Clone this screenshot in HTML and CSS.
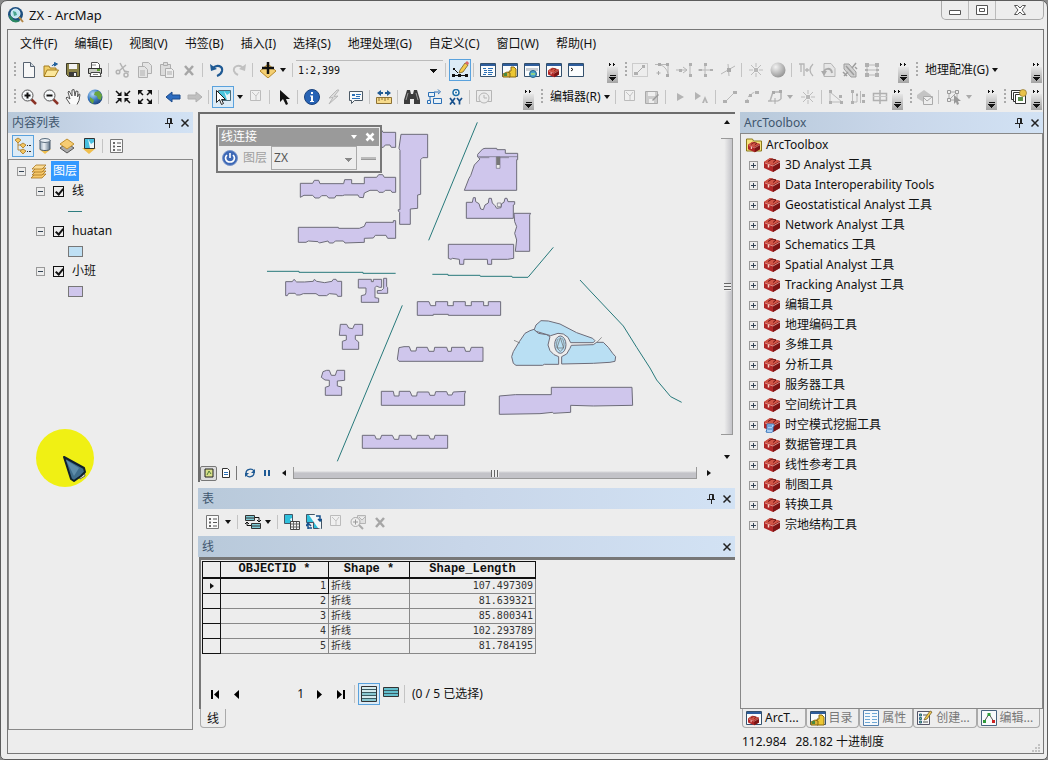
FILE: index.html
```html
<!DOCTYPE html>
<html lang="zh-CN">
<head>
  <meta charset="UTF-8">
  <meta name="viewport" content="width=device-width, initial-scale=1.0">
  <title>ZX - ArcMap</title>
  <link rel="stylesheet" href="styles.css">
</head>
<body>

  <!-- icon set -->
  <svg class="icon-defs" aria-hidden="true">
    <defs>
      <linearGradient id="steel" x1="0" y1="0" x2="1" y2="0"><stop offset="0" stop-color="#8fa3b5"/><stop offset=".4" stop-color="#eef3f7"/><stop offset="1" stop-color="#5f7488"/></linearGradient>
      <radialGradient id="globe" cx=".35" cy=".3" r=".8"><stop offset="0" stop-color="#b7dcf5"/><stop offset=".5" stop-color="#3d7cc4"/><stop offset="1" stop-color="#17396f"/></radialGradient>
      <radialGradient id="ball" cx=".35" cy=".3" r=".8"><stop offset="0" stop-color="#f2f2f2"/><stop offset="1" stop-color="#8c8c8c"/></radialGradient>
    </defs>
    <symbol id="i-app" viewBox="0 0 16 16"><circle cx="7.5" cy="7.5" r="7.5" fill="#1c4f80"/><path d="M1 9c3-2 3 4 6 4s4 1 5 1c-4 3-10 1-11-5z" fill="#2d8a62"/><circle cx="7.5" cy="6.5" r="4.5" fill="#bfe6f2" stroke="#e6f5fa"/><path d="M5 4l3 1 1 3-3 1z" fill="#4aa58c"/><path d="M11 10l4 5" stroke="#b38644" stroke-width="2"/></symbol>
    <symbol id="i-new" viewBox="0 0 16 16"><path d="M2.5.5h7l4 4v11h-11z" fill="#f7f7f7" stroke="#566270"/><path d="M9.5.5v4h4" fill="#cfd8e0" stroke="#566270"/></symbol>
    <symbol id="i-open" viewBox="0 0 16 16"><path d="M1 14V4h5l1 2h6v2" fill="#f0cf68" stroke="#a47d1f"/><path d="M1 14.5L4 8h11.5L12 14.5z" fill="#fbe79c" stroke="#a47d1f"/><path d="M9 4c1-2 3-2 4-2M11.5.5l3 1.5-3 2z" fill="#23619c" stroke="#23619c"/></symbol>
    <symbol id="i-save" viewBox="0 0 16 16"><path d="M1.5 1.5h13v13h-11l-2-2z" fill="#8a8248" stroke="#3c3a28"/><path d="M4 2h8v5H4z" fill="#f3f3f3"/><path d="M4 10h8v4H4z" fill="#3b3b3b"/><path d="M9 11h2v3H9z" fill="#eee"/></symbol>
    <symbol id="i-print" viewBox="0 0 16 16"><path d="M4.5 6V.5h6l2 2V6" fill="#fff" stroke="#555"/><path d="M1.5 6.5h13v5h-13z" fill="#c9ccc4" stroke="#333"/><path d="M4 10.5h9l1 4H3z" fill="#fff" stroke="#444"/><path d="M10 8h3" stroke="#5aa02c" stroke-width="2"/><path d="M5 3h4M6 12.5h5" stroke="#888"/></symbol>
    <symbol id="i-cut" viewBox="0 0 16 16"><g fill="none" stroke="#b3b3b3" stroke-width="1.5"><path d="M5 1l5 9M11 3L4 9"/><circle cx="3" cy="10" r="1.8"/><circle cx="11" cy="13" r="2"/><path d="M9 9l5 1"/></g></symbol>
    <symbol id="i-copy" viewBox="0 0 16 16"><g fill="#e4e4e4" stroke="#b0b0b0"><path d="M5.5.5h6l3 3v8h-9z"/><path d="M1.5 4.5h6l3 3v8h-9z"/><path d="M3 9h5M3 11h5M3 13h5"/></g></symbol>
    <symbol id="i-paste" viewBox="0 0 16 16"><g fill="#dcdcdc" stroke="#adadad"><path d="M1.5 2.5h10v11h-10z"/><path d="M4.5.5h4v3h-4z"/><path d="M6.5 6.5h6l2 2v7h-8z" fill="#eee"/><path d="M8 10h5M8 12h5"/></g></symbol>
    <symbol id="i-x" viewBox="0 0 16 16"><path d="M4 4l8 9M12 4l-8 9" stroke="#a6a6a6" stroke-width="2.5"/></symbol>
    <symbol id="i-undo" viewBox="0 0 16 16"><path d="M4 6c4-4 10-2 9 3-.5 2-2 4-5 5" fill="none" stroke="#1f5a94" stroke-width="2.2"/><path d="M1 2l1 7 6-2z" fill="#1f5a94"/></symbol>
    <symbol id="i-redo" viewBox="0 0 16 16"><path d="M12 6C8 2 2 4 3 9c.5 2 2 3 4 4" fill="none" stroke="#c0c0c0" stroke-width="2"/><path d="M15 2l-1 7-6-2z" fill="#c0c0c0"/></symbol>
    <symbol id="i-add" viewBox="0 0 16 16"><path d="M0 9l8-7 8 7-8 7z" fill="#f4cf72" stroke="#b78a2c"/><path d="M8 0v12M2 6h12" stroke="#111" stroke-width="2.5"/></symbol>
    <symbol id="i-editor" viewBox="0 0 18 18"><path d="M3 14.5h12M2 7l5 5" fill="none" stroke="#111"/><path d="M9 9l5-7 3 2-5 7-4 1z" fill="#f2c94c" stroke="#75602b" stroke-width=".8"/><path d="M14 2l3 2 1-2-2-2z" fill="#d66"/><path d="M1 13h3v3H1zM7 13h3v3H7zM14 13h3v3h-3zM2 7h2v2H2z" fill="#111"/></symbol>
    <symbol id="i-win" viewBox="0 0 16 16"><path d="M.5 1.5h15v13H.5z" fill="#fafcfd" stroke="#34506c"/><path d="M1 2h14v2H1z" fill="#2e5d9c"/></symbol>
    <symbol id="i-toc" viewBox="0 0 16 16"><use href="#i-win"/><path d="M3 6.5h3M4 8.5h3M4 10.5h3M3 12.5h3M8 6.5h5M8 8.5h4M8 10.5h5M8 12.5h4" stroke="#2b6fb5"/></symbol>
    <symbol id="i-catalog" viewBox="0 0 16 16"><use href="#i-win"/><path d="M9 5h3l2 2v8H7V9h2z" fill="#ecc733" stroke="#8a6a10"/><path d="M1 12l4-2 3 1v4H1z" fill="#d8b23a" stroke="#8a6a10"/><path d="M2 11h3v3H2z" fill="#4a8a3f"/></symbol>
    <symbol id="i-search" viewBox="0 0 16 16"><use href="#i-win"/><path d="M2 6h12v3H2z" fill="#c7cdd3"/><circle cx="9" cy="12" r="3.5" fill="#4aa3cc" stroke="#27638a"/><path d="M7 12h4" stroke="#8fd18a" stroke-width="2"/></symbol>
    <symbol id="i-box" viewBox="0 0 16 16"><path d="M0 5l6-4 10 3v7l-7 4-9-4z" fill="#b02626"/><path d="M0 5l6-4 10 3-7 4z" fill="#cf5445"/><path d="M9 8v7l7-4V4z" fill="#7c1414"/><path d="M1 6l8 3 7-4" fill="none" stroke="#eeb0a6" stroke-width=".8"/><path d="M4 4.5L8 2l4 1-3 2.5" fill="none" stroke="#6d1212"/><path d="M4.5 7.5v3" stroke="#f6d2c8" stroke-width="1.5"/></symbol>
    <symbol id="i-toolbox" viewBox="0 0 16 16"><use href="#i-win"/><use href="#i-box" x="2" y="5" width="11" height="11"/></symbol>
    <symbol id="i-boxfolder" viewBox="0 0 16 16"><path d="M.5 14V2h6l1 2h8v10z" fill="#f6e27c" stroke="#8a7a1d"/><use href="#i-box" x="2" y="4" width="12" height="12"/></symbol>
    <symbol id="i-boxscript" viewBox="0 0 16 16"><use href="#i-box"/><path d="M3 7h6c2 0 1 3 0 3v4c0 2-4 2-7 1l1-3z" fill="#a8cdf3" stroke="#3d78bb"/><path d="M4 9h4M4 12h4" stroke="#3d78bb"/></symbol>
    <symbol id="i-python" viewBox="0 0 16 16"><use href="#i-win"/><path d="M3 6l2 1.5L3 9" fill="none" stroke="#111"/></symbol>
    <symbol id="i-zoomin" viewBox="0 0 16 16"><path d="M10 10l5 5" stroke="#8a3226" stroke-width="2.5"/><circle cx="6.5" cy="6.5" r="5.5" fill="#f5f8fa" stroke="#555"/><path d="M6.5 3.5v6M3.5 6.5h6" stroke="#111" stroke-width="2"/></symbol>
    <symbol id="i-zoomout" viewBox="0 0 16 16"><path d="M10 10l5 5" stroke="#8a3226" stroke-width="2.5"/><circle cx="6.5" cy="6.5" r="5.5" fill="#f5f8fa" stroke="#555"/><path d="M3.5 6.5h6" stroke="#111" stroke-width="2"/></symbol>
    <symbol id="i-pan" viewBox="0 0 16 16"><path d="M5 15L1 9l1-1 3 2-2-7 1-1 3 5V1l2-.5L10 7l1-5 2 .5-.5 5.5L14 5l1 .5-1 6-2 4" fill="#fafafa" stroke="#555"/></symbol>
    <symbol id="i-globe" viewBox="0 0 16 16"><circle cx="8" cy="8" r="7.5" fill="url(#globe)"/><path d="M8 3l4-1 3 4-1 5-3-1-1-3-3-1zM3 8l4 3-1 4-3-3z" fill="#6aa53f"/></symbol>
    <symbol id="i-fixin" viewBox="0 0 16 16"><path d="M1 2l4 4M15 2l-4 4M1 14l4-4M15 14l-4-4" stroke="#111" stroke-width="1.5"/><path d="M6.5 7H2l4.5-4.5zM9.5 7V2.5L14 7zM6.5 9v4.5L2 9zM9.5 9H14l-4.5 4.5z" fill="#111"/></symbol>
    <symbol id="i-fixout" viewBox="0 0 16 16"><path d="M2 2l4 4M14 2l-4 4M2 14l4-4M14 14l-4-4" stroke="#111" stroke-width="1.5"/><path d="M1 1h5L1 6zM15 1v5l-5-5zM1 15v-5l5 5zM15 15h-5l5-5z" fill="#111"/></symbol>
    <symbol id="i-back" viewBox="0 0 16 16"><path d="M1 8l6-5v3h8v4H7v3z" fill="#2c6cc0" stroke="#1b4a8c"/></symbol>
    <symbol id="i-fwd" viewBox="0 0 16 16"><path d="M15 8L9 3v3H1v4h8v3z" fill="#c0c0c0" stroke="#b0b0b0"/></symbol>
    <symbol id="i-select" viewBox="0 0 16 16"><path d="M3.5 1.5h12v10h-12z" fill="#49c5dd" stroke="#4d6a77"/><path d="M9 2l3 4 3-2v7h-3z" fill="#eaf5f8"/><path d="M1.5 1.5v12l3-3 2 5 2-1-2-4h4z" fill="#fff" stroke="#222"/></symbol>
    <symbol id="i-clear" viewBox="0 0 16 16"><path d="M2.5 1.5h10v10h-10z" fill="#f0f0f0" stroke="#bbb"/><path d="M4 3l4 4 3-4M8 7v4" fill="none" stroke="#c4c4c4"/></symbol>
    <symbol id="i-arrow" viewBox="0 0 16 16"><path d="M4 1v12l3-3 3 6 2-1-2-5h4z" fill="#111"/></symbol>
    <symbol id="i-info" viewBox="0 0 16 16"><circle cx="8" cy="8" r="7.5" fill="#2763b5" stroke="#1a437e"/><path d="M7 3h2v2H7zM6 6.5h3V12h1v1H6v-1h1V7.5H6z" fill="#fff"/></symbol>
    <symbol id="i-bolt" viewBox="0 0 16 16"><path d="M11 1L3 9l4-.5L3 15l9-8-4 .5L13 1z" fill="#ddd" stroke="#b8b8b8"/></symbol>
    <symbol id="i-html" viewBox="0 0 16 16"><path d="M1.5 2.5h13v9h-8l-3 3v-3h-2z" fill="#f8fafb" stroke="#4d5a66"/><path d="M4 5h3v2H4z" fill="#2b6fb5"/><path d="M8 5.5h5M8 7.5h4M4 9.5h8" stroke="#2b6fb5"/></symbol>
    <symbol id="i-measure" viewBox="0 0 16 16"><path d="M.5 8.5h15v6H.5z" fill="#f7db8b" stroke="#8d7134"/><path d="M3 9v3M6 9v2M9 9v3M12 9v2" stroke="#8d7134"/><path d="M1 4l4-3v2h2v2H5v2zM15 4l-4-3v2H9v2h2v2z" fill="#1f5a94"/></symbol>
    <symbol id="i-find" viewBox="0 0 16 16"><path d="M3 1h3l1 4h2l1-4h3l3 10v4h-6v-5H6v5H0v-4z" fill="#3c3c3c"/><path d="M4 4l-2 7M12 4l2 7" stroke="#999"/></symbol>
    <symbol id="i-route" viewBox="0 0 16 16"><g fill="#e7f1f8" stroke="#2b6fb5"><path d="M2.5 3.5h6v4h-6zM7.5 9.5h8v5h-8zM1.5 11.5h3v3h-3z"/><path d="M8 3h5M12 .5L14.5 3 12 5M4 8v3" fill="none"/></g></symbol>
    <symbol id="i-xy" viewBox="0 0 16 16"><circle cx="8" cy="3.5" r="3" fill="#fff" stroke="#1f6fa8" stroke-width="1.5"/><circle cx="8" cy="3.5" r="1" fill="#1f6fa8"/><path d="M2 9l5 6.5M7 9l-5 6.5M9 9l2.5 3L14 9M11.5 12v3.5" fill="none" stroke="#17508c" stroke-width="1.7"/></symbol>
    <symbol id="i-time" viewBox="0 0 16 16"><g fill="#ececec" stroke="#b5b5b5"><path d="M.5 1.5h15v11H.5z"/><circle cx="8" cy="9" r="5"/><path d="M8 6v3h3" fill="none"/></g></symbol>
    <symbol id="i-savegray" viewBox="0 0 16 16"><path d="M1.5 2.5h12v12h-12z" fill="#ccc" stroke="#aaa"/><path d="M4 3h7v4H4zM5 10h5v4H5z" fill="#eee"/><path d="M8 11l6-6 1 1-6 6z" fill="#999"/></symbol>
    <symbol id="i-play" viewBox="0 0 16 16"><path d="M5 4l7 4-7 4z" fill="#b4b4b4"/></symbol>
    <symbol id="i-playa" viewBox="0 0 16 16"><path d="M1 3l6 4-6 4zM8 14l3-7 3 7h-2l-1-3-1 3z" fill="#b4b4b4"/></symbol>
    <symbol id="i-line" viewBox="0 0 16 16"><path d="M3 13L13 3" stroke="#bbb"/><path d="M1 11h4v3H1zM11 2h4v3h-4z" fill="#b0b0b0"/></symbol>
    <symbol id="i-arc" viewBox="0 0 16 16"><path d="M3 13c0-6 4-9 9-10" fill="none" stroke="#bbb" stroke-dasharray="3 2"/><path d="M1 11h4v3H1zM5 5h3v3H5zM11 2h4v3h-4z" fill="#b0b0b0"/></symbol>
    <symbol id="i-trace" viewBox="0 0 16 16"><path d="M3 12l3-9h8v7M1 12h4M11 12l3-2" fill="none" stroke="#b5b5b5" stroke-width="1.5"/><path d="M5 2h3v3H5zM12 1h3v3h-3z" fill="#aaa"/><path d="M8 9v6M5 12h6" stroke="#aaa"/></symbol>
    <symbol id="i-burst" viewBox="0 0 16 16"><path d="M8 1v4M8 11v4M1 8h4M11 8h4M3 3l3 3M13 3l-3 3M3 13l3-3M13 13l-3-3" stroke="#bdbdbd"/><path d="M6 6h4v4H6z" fill="#b8b8b8"/></symbol>
    <symbol id="i-edge" viewBox="0 0 16 16"><path d="M2 13V3l12 10z" fill="none" stroke="#bbb"/><path d="M1 1h3v3H1zM1 12h3v3H1zM12 12h3v3h-3zM11 6h3v3h-3z" fill="#b0b0b0"/></symbol>
    <symbol id="i-mirror" viewBox="0 0 16 16"><path d="M2.5 2v12M2 13h5V4M10.5 2v12" fill="none" stroke="#bbb"/><path d="M1 1h3v3H1zM1 12h3v3H1zM6 5h2v2H6zM12 5h3v3h-3zM12 11h3v3h-3z" fill="#b0b0b0"/></symbol>
    <symbol id="i-split" viewBox="0 0 16 16"><path d="M1.5 4.5h13v7h-13zM8 1v14" fill="none" stroke="#b0b0b0" stroke-width="1.5"/><path d="M1 7.5h14" stroke="#c4c4c4"/></symbol>
    <symbol id="i-dashline" viewBox="0 0 16 16"><path d="M.5 1.5h15v13H.5z" fill="none" stroke="#aaa" stroke-dasharray="1 1"/><path d="M4 12l8-8" stroke="#aaa"/><path d="M2 10h4v3H2zM10 3h3v3h-3z" fill="#b0b0b0"/></symbol>
    <symbol id="i-fillet" viewBox="0 0 16 16"><path d="M1 2.5h13v12M5 2.5c5 1 8 5 9 9" fill="none" stroke="#b8b8b8"/><path d="M4 1h3v3H4zM12 1h3v3h-3zM12 12h3v3h-3z" fill="#aaa"/><path d="M4.5 9v4M2.5 11h4" stroke="#aaa"/></symbol>
    <symbol id="i-extend" viewBox="0 0 16 16"><path d="M0 8h11M14 2v12M7 5l4 3-4 3" fill="none" stroke="#b5b5b5"/><path d="M3 7h3v3H3zM13 1h3v3h-3zM13 12h3v3h-3z" fill="#b0b0b0"/></symbol>
    <symbol id="i-trim" viewBox="0 0 16 16"><path d="M0 8h15M7 1v14" stroke="#b8b8b8"/><path d="M6 1h3v3H6zM6 12h3v3H6zM1 7h3v2H1zM12 7h3v2h-3z" fill="#b0b0b0"/></symbol>
    <symbol id="i-cross" viewBox="0 0 16 16"><path d="M1 12L15 4M8 2l1 12" stroke="#b8b8b8"/><path d="M7 6h4v4H7z" fill="#aaa"/></symbol>
    <symbol id="i-ball" viewBox="0 0 16 16"><circle cx="8" cy="8" r="7.5" fill="url(#ball)"/></symbol>
    <symbol id="i-align" viewBox="0 0 16 16"><path d="M1 2h5v12M3 2v8M7 8h4M9 6v4M15 2c-4 4-4 8 0 12" fill="none" stroke="#b5b5b5" stroke-width="1.3"/></symbol>
    <symbol id="i-rotate" viewBox="0 0 16 16"><path d="M4 1.5h7l4 5v8H4z" fill="#e6e6e6" stroke="#b5b5b5"/><path d="M12 11c-1-6-8-5-8 0" fill="none" stroke="#aaa" stroke-width="2"/><path d="M1 9h6l-3 5z" fill="#aaa"/></symbol>
    <symbol id="i-cutpoly" viewBox="0 0 16 16"><path d="M2 2h5l7 8v5h-5L2 7z" fill="#d0d0d0" stroke="#9d9d9d"/><path d="M14 1l-4 5M6 10l-4 4M4 4l8 9M13 5l2 2M1 10l4 4" stroke="#9d9d9d" stroke-width="1.5"/></symbol>
    <symbol id="i-mesh" viewBox="0 0 16 16"><path d="M3 1v14M13 1v14M1 3h14M1 8h14M1 13h14" stroke="#b8b8b8"/><path d="M1 1h4v4H1zM11 1h4v4h-4zM1 11h4v4H1zM11 11h4v4h-4zM1 7h3v2H1zM12 7h3v2h-3z" fill="#b0b0b0"/></symbol>
    <symbol id="i-topo" viewBox="0 0 16 16"><path d="M0 6l7-5 7 5v5l-6 3-8-5z" fill="#c4c4c4"/><path d="M6.5 7.5h9v8h-9z" fill="#eee" stroke="#aaa"/><path d="M7 9l3 3 5-4" fill="none" stroke="#aaa"/></symbol>
    <symbol id="i-topoedit" viewBox="0 0 16 16"><path d="M3 3h8v8H3zM3 11l8-8" fill="none" stroke="#aaa"/><path d="M1.5 1.5h3v3h-3zM9.5 1.5h3v3h-3zM1.5 9.5h3v3h-3z" fill="#ededed" stroke="#999"/><path d="M8 6v9l2-2 1 3 2-1-1-3h3z" fill="#999"/></symbol>
    <symbol id="i-stack" viewBox="0 0 16 16"><g fill="#fff" stroke="#333"><path d="M.5 1.5h9v9h-9z"/><path d="M2.5 3.5h9v9h-9z"/><path d="M4.5 5.5h10v9h-10z"/></g><circle cx="12" cy="4" r="3.5" fill="#e9c24a" stroke="#826622" stroke-width=".6"/><path d="M7 8h5v4H7z" fill="#5e8f4c"/></symbol>
    <symbol id="i-listdraw" viewBox="0 0 18 18"><path d="M4 4v9h5M4 8h5" fill="none" stroke="#b68a3c"/><path d="M1 3l3-2 3 2-3 3zM6 8l3-2 3 2-3 3zM6 14l3-2 3 2-3 3z" fill="#f3c65f" stroke="#b68a3c"/><path d="M13 8.5h1M13 14.5h1M15 8.5h2M15 14.5h2" stroke="#333"/></symbol>
    <symbol id="i-listsource" viewBox="0 0 16 16"><path d="M2 11h12l-6 5z" fill="#f0bf4d"/><path d="M3 2v9c0 2 10 2 10 0V2z" fill="url(#steel)" stroke="#4a5b6b"/><ellipse cx="8" cy="2.5" rx="5" ry="2" fill="#e8eef3" stroke="#5b6d7e"/></symbol>
    <symbol id="i-listvis" viewBox="0 0 16 16"><path d="M1 10l7-5 7 5-7 5z" fill="#aaa" stroke="#555"/><path d="M1 6l7-5 7 5-7 5z" fill="#f6cc72" stroke="#c2912f"/></symbol>
    <symbol id="i-listsel" viewBox="0 0 16 16"><path d="M1 10h14l-7 6z" fill="#f0bf4d"/><path d="M3.5.5h10v10h-10z" fill="#48bfe0" stroke="#333"/><path d="M7 1l3 5 3-2v6H9z" fill="#eef8fb"/></symbol>
    <symbol id="i-options" viewBox="0 0 16 16"><path d="M1.5 1.5h12v13h-12z" fill="#fafafa" stroke="#777"/><path d="M4 4h2v2H4zM4 7.5h2v2H4zM4 11h2v2H4z" fill="#666"/><path d="M8 5h4M8 8.5h4M8 12h4" stroke="#555"/></symbol>
    <symbol id="i-layers" viewBox="0 0 16 16"><g fill="#f6c768" stroke="#a87722" stroke-width=".8"><path d="M0 15l4-4h11l-4 4z"/><path d="M1 12l4-4h10l-4 4z"/><path d="M1 9l4-4h10l-4 4z"/><path d="M1 6l4-4h10l-4 4z" fill="#fbdc95"/></g></symbol>
    <symbol id="i-pin" viewBox="0 0 10 12"><path d="M3.5 6.5v-5h4v5M1 6.5h8M6.5 1v5M5.5 7v4" fill="none" stroke="#222"/></symbol>
    <symbol id="i-close" viewBox="0 0 10 10"><path d="M1.5 1.5l7 7M8.5 1.5l-7 7" stroke="currentColor" stroke-width="1.5"/></symbol>
    <symbol id="i-close-bold" viewBox="0 0 10 10"><path d="M1.5 1.5l7 7M8.5 1.5l-7 7" stroke="#fff" stroke-width="2.5"/></symbol>
    <symbol id="i-power" viewBox="0 0 16 16"><circle cx="8" cy="8" r="7.5" fill="#3d68b6" stroke="#7c98cb"/><path d="M5 5c-3 3-1 7 3 7s6-4 3-7M8 3v5" fill="none" stroke="#fff" stroke-width="1.6"/></symbol>
    <symbol id="i-dataview" viewBox="0 0 12 12"><path d="M2 2h8v8H2z" fill="#d8e08a" stroke="#222"/><path d="M4 8l2-4 2 3" fill="none" stroke="#4d7a3c"/></symbol>
    <symbol id="i-layout" viewBox="0 0 12 12"><path d="M2.5 1.5h5l2 2v7h-7z" fill="#fff" stroke="#333"/><path d="M4 5.5h4M4 7.5h4" stroke="#2b6fb5"/></symbol>
    <symbol id="i-refresh" viewBox="0 0 12 12"><path d="M2 6c0-4 6-5 8-2M10 6c0 4-6 5-8 2" fill="none" stroke="#1f5a94" stroke-width="1.3"/><path d="M11 2v4H7zM1 10V6h4z" fill="#1f5a94"/></symbol>
    <symbol id="i-pause" viewBox="0 0 12 12"><path d="M3 3h2v6H3zM7 3h2v6H7z" fill="#1f5a94"/></symbol>
    <symbol id="i-related" viewBox="0 0 16 16"><path d="M.5 1.5h9v5h-9zM6.5 9.5h9v5h-9z" fill="#7fcbd6" stroke="#333"/><path d="M1 4h8M7 12h8" stroke="#333"/><path d="M10 3.5h4v4M12 6l2 2 2-2M6 11.5H2v-3M0 10l2-2 2 2" fill="none" stroke="#111"/></symbol>
    <symbol id="i-selattr" viewBox="0 0 16 16"><path d="M.5.5h8v9h-8z" fill="#2fc0dc" stroke="#456"/><path d="M4 1l2 4 2-1v5z" fill="#eef8fb"/><path d="M6.5 7.5h9v8h-9z" fill="#f4f4f4" stroke="#444"/><path d="M7 10h8M7 13h8M9.5 8v7M12.5 8v7" stroke="#666"/></symbol>
    <symbol id="i-switch" viewBox="0 0 16 16"><path d="M.5.5h8v8h-8zM7.5 5.5h8v9h-8z" fill="#2fc0dc" stroke="#456"/><path d="M3 1l4 6 5 7 3 1V8L9 1z" fill="#f2f7f9"/><path d="M10 2h4v4M12 5l2 2 2-2M2 15v-5M0 12l2-3 3 3M2 14h4" fill="none" stroke="#17508c" stroke-width="1.5"/></symbol>
    <symbol id="i-zoomsel" viewBox="0 0 16 16"><path d="M7.5 1.5h8v8h-8zM9 3l3 3 3-3" fill="#e0e0e0" stroke="#b5b5b5"/><circle cx="5.5" cy="8" r="4.5" fill="#eee" stroke="#aaa"/><path d="M9 11l4 4" stroke="#aaa" stroke-width="2"/><path d="M3 8h5M5.5 5.5v5" stroke="#999"/></symbol>
    <symbol id="i-allrows" viewBox="0 0 16 16"><path d="M.5.5h15v15H.5z" fill="#d5ebee" stroke="#333"/><path d="M1 3.5h14M1 6.5h14M1 9.5h14M1 12.5h14" stroke="#3a5c64"/><path d="M1 7h14v2H1zM1 13h14v2H1z" fill="#88c7d0"/></symbol>
    <symbol id="i-selrows" viewBox="0 0 16 16"><path d="M.5 1.5h15v9H.5z" fill="#64bfcd" stroke="#333"/><path d="M1 4.5h14M1 7.5h14" stroke="#3a5c64"/></symbol>
    <symbol id="i-attrs" viewBox="0 0 16 16"><path d="M.5.5h15v15H.5z" fill="#f5f9fc" stroke="#5380ad"/><path d="M2 3.5h5M9 3.5h5M2 6.5h5M9 6.5h5M2 9.5h5M9 9.5h5M2 12.5h5M9 12.5h5" stroke="#6fa9d6"/></symbol>
    <symbol id="i-create" viewBox="0 0 16 16"><path d="M.5 1.5h12v13H.5z" fill="#f8f8f8" stroke="#556"/><path d="M2.5 4h2v2h-2zM2.5 7.5h2v2h-2zM2.5 11h2v2h-2z" fill="#7fcb70" stroke="#368"/><path d="M6 5h4M6 12h5" stroke="#555"/><path d="M8 8l5-7 2 1-5 7-3 1z" fill="#f2c94c" stroke="#75602b" stroke-width=".8"/></symbol>
    <symbol id="i-sketch" viewBox="0 0 16 16"><path d="M.5.5h15v15H.5z" fill="#f8fafc" stroke="#47627d"/><path d="M3 12l5-8 5 8" fill="none" stroke="#555"/><path d="M2 10h3v3H2zM6.5 3h3v3h-3z" fill="#2f9a3c"/><path d="M11 10h3v3h-3z" fill="#c22"/></symbol>
  </svg>

  <div class="window">
    <header class="titlebar">
      <svg class="icon"><use href="#i-app"/></svg>
      <h1>ZX - ArcMap</h1>
      <div class="window-buttons">
        <button aria-label="最小化"><svg width="14" height="14"><path d="M1.5 7.5h11v4h-11z" fill="#fff" stroke="#555"/></svg></button>
        <button aria-label="还原"><svg width="14" height="14"><path d="M1.5 2.5h11v9h-11z" fill="#fff" stroke="#555"/><path d="M4.5 5.5h5v3h-5z" fill="#fff" stroke="#555"/></svg></button>
        <button class="wide" aria-label="关闭"><svg width="14" height="14"><path d="M1.5 2.5h3L7 5l2.5-2.5h3L9 7l3.5 4.5h-3L7 9l-2.5 2.5h-3L5 7z" fill="#fff" stroke="#555"/></svg></button>
      </div>
    </header>

    <div class="frame">
      <nav class="menubar">
        <button>文件(F)</button>
        <button>编辑(E)</button>
        <button>视图(V)</button>
        <button>书签(B)</button>
        <button>插入(I)</button>
        <button>选择(S)</button>
        <button>地理处理(G)</button>
        <button>自定义(C)</button>
        <button>窗口(W)</button>
        <button>帮助(H)</button>
      </nav>

      <div class="toolbars row-one">
        <div class="bar">
          <span class="grip"></span>
          <button class="tool" aria-label="新建"><svg class="icon"><use href="#i-new"/></svg></button>
          <button class="tool" aria-label="打开"><svg class="icon"><use href="#i-open"/></svg></button>
          <button class="tool" aria-label="保存"><svg class="icon"><use href="#i-save"/></svg></button>
          <button class="tool" aria-label="打印"><svg class="icon"><use href="#i-print"/></svg></button>
          <span class="sep"></span>
          <button class="tool" aria-label="剪切" disabled><svg class="icon"><use href="#i-cut"/></svg></button>
          <button class="tool" aria-label="复制" disabled><svg class="icon"><use href="#i-copy"/></svg></button>
          <button class="tool" aria-label="粘贴" disabled><svg class="icon"><use href="#i-paste"/></svg></button>
          <button class="tool" aria-label="删除" disabled><svg class="icon"><use href="#i-x"/></svg></button>
          <span class="sep"></span>
          <button class="tool" aria-label="撤销"><svg class="icon"><use href="#i-undo"/></svg></button>
          <button class="tool" aria-label="恢复" disabled><svg class="icon"><use href="#i-redo"/></svg></button>
          <span class="sep"></span>
          <button class="tool drop" aria-label="添加数据"><svg class="icon"><use href="#i-add"/></svg><span class="caret"></span></button>
          <span class="sep"></span>
          <select class="scale" aria-label="地图比例"><option>1:2,399</option></select>
          <span class="sep"></span>
          <button class="tool pressed" aria-label="编辑器工具条"><svg class="icon large"><use href="#i-editor"/></svg></button>
          <span class="sep"></span>
          <button class="tool" aria-label="内容列表"><svg class="icon"><use href="#i-toc"/></svg></button>
          <button class="tool" aria-label="目录"><svg class="icon"><use href="#i-catalog"/></svg></button>
          <button class="tool" aria-label="搜索"><svg class="icon"><use href="#i-search"/></svg></button>
          <button class="tool" aria-label="工具箱"><svg class="icon"><use href="#i-toolbox"/></svg></button>
          <button class="tool" aria-label="Python"><svg class="icon"><use href="#i-python"/></svg></button>
          <button class="overflow" aria-label="更多"></button>
        </div>
        <div class="bar">
          <span class="grip"></span>
          <button class="tool" aria-label="复制平行线" disabled><svg class="icon"><use href="#i-dashline"/></svg></button>
          <button class="tool" aria-label="内圆角" disabled><svg class="icon"><use href="#i-fillet"/></svg></button>
          <button class="tool" aria-label="延伸" disabled><svg class="icon"><use href="#i-extend"/></svg></button>
          <button class="tool" aria-label="修剪" disabled><svg class="icon"><use href="#i-trim"/></svg></button>
          <button class="tool" aria-label="线相交" disabled><svg class="icon"><use href="#i-cross"/></svg></button>
          <span class="sep"></span>
          <button class="tool" aria-label="拆分多部件" disabled><svg class="icon"><use href="#i-burst"/></svg></button>
          <button class="tool" aria-label="构造大地测量" disabled><svg class="icon"><use href="#i-ball"/></svg></button>
          <span class="sep"></span>
          <button class="tool" aria-label="对齐" disabled><svg class="icon"><use href="#i-align"/></svg></button>
          <button class="tool" aria-label="替换几何" disabled><svg class="icon"><use href="#i-rotate"/></svg></button>
          <button class="tool" aria-label="构造面" disabled><svg class="icon"><use href="#i-cutpoly"/></svg></button>
          <button class="tool" aria-label="分割面" disabled><svg class="icon"><use href="#i-mesh"/></svg></button>
          <button class="overflow" aria-label="更多"></button>
        </div>
        <div class="bar">
          <span class="grip"></span>
          <button class="text-tool">地理配准(G)<span class="caret"></span></button>
          <button class="overflow" aria-label="更多"></button>
        </div>
      </div>

      <div class="toolbars row-two">
        <div class="bar">
          <span class="grip"></span>
          <button class="tool" aria-label="放大"><svg class="icon"><use href="#i-zoomin"/></svg></button>
          <button class="tool" aria-label="缩小"><svg class="icon"><use href="#i-zoomout"/></svg></button>
          <button class="tool" aria-label="平移"><svg class="icon"><use href="#i-pan"/></svg></button>
          <button class="tool" aria-label="全图"><svg class="icon"><use href="#i-globe"/></svg></button>
          <span class="sep"></span>
          <button class="tool" aria-label="固定比例放大"><svg class="icon"><use href="#i-fixin"/></svg></button>
          <button class="tool" aria-label="固定比例缩小"><svg class="icon"><use href="#i-fixout"/></svg></button>
          <span class="sep"></span>
          <button class="tool" aria-label="上一视图"><svg class="icon"><use href="#i-back"/></svg></button>
          <button class="tool" aria-label="下一视图" disabled><svg class="icon"><use href="#i-fwd"/></svg></button>
          <span class="sep"></span>
          <button class="tool pressed" aria-label="选择要素"><svg class="icon"><use href="#i-select"/></svg></button>
          <button class="arrow-only" aria-label="选择方式"><span class="caret"></span></button>
          <button class="tool" aria-label="清除所选要素" disabled><svg class="icon"><use href="#i-clear"/></svg></button>
          <span class="sep"></span>
          <button class="tool" aria-label="选择元素"><svg class="icon"><use href="#i-arrow"/></svg></button>
          <span class="sep"></span>
          <button class="tool" aria-label="识别"><svg class="icon"><use href="#i-info"/></svg></button>
          <button class="tool" aria-label="超链接" disabled><svg class="icon"><use href="#i-bolt"/></svg></button>
          <button class="tool" aria-label="HTML 弹出窗口"><svg class="icon"><use href="#i-html"/></svg></button>
          <span class="sep"></span>
          <button class="tool" aria-label="测量"><svg class="icon"><use href="#i-measure"/></svg></button>
          <span class="sep"></span>
          <button class="tool" aria-label="查找"><svg class="icon"><use href="#i-find"/></svg></button>
          <button class="tool" aria-label="查找路径"><svg class="icon"><use href="#i-route"/></svg></button>
          <button class="tool" aria-label="转到 XY"><svg class="icon"><use href="#i-xy"/></svg></button>
          <span class="sep"></span>
          <button class="tool" aria-label="时间滑块" disabled><svg class="icon"><use href="#i-time"/></svg></button>
          <button class="overflow" aria-label="更多"></button>
        </div>
        <div class="bar">
          <span class="grip"></span>
          <button class="text-tool">编辑器(R)<span class="caret"></span></button>
          <span class="sep"></span>
          <button class="tool" aria-label="清除" disabled><svg class="icon"><use href="#i-clear"/></svg></button>
          <button class="tool" aria-label="保存编辑" disabled><svg class="icon"><use href="#i-savegray"/></svg></button>
          <span class="sep"></span>
          <button class="tool" aria-label="编辑工具" disabled><svg class="icon"><use href="#i-play"/></svg></button>
          <button class="tool" aria-label="编辑注记" disabled><svg class="icon"><use href="#i-playa"/></svg></button>
          <span class="sep"></span>
          <button class="tool" aria-label="直线段" disabled><svg class="icon"><use href="#i-line"/></svg></button>
          <button class="tool" aria-label="弧段" disabled><svg class="icon"><use href="#i-arc"/></svg></button>
          <button class="tool drop" aria-label="追踪" disabled><svg class="icon"><use href="#i-trace"/></svg><span class="caret"></span></button>
          <button class="tool" aria-label="点" disabled><svg class="icon"><use href="#i-burst"/></svg></button>
          <span class="sep"></span>
          <button class="tool" aria-label="编辑折点" disabled><svg class="icon"><use href="#i-edge"/></svg></button>
          <button class="tool" aria-label="整形" disabled><svg class="icon"><use href="#i-mirror"/></svg></button>
          <button class="tool" aria-label="裁剪面" disabled><svg class="icon"><use href="#i-split"/></svg></button>
          <button class="overflow" aria-label="更多"></button>
        </div>
        <div class="bar">
          <span class="grip"></span>
          <button class="tool" aria-label="选择拓扑" disabled><svg class="icon"><use href="#i-topo"/></svg></button>
          <span class="sep"></span>
          <button class="tool drop" aria-label="拓扑编辑" disabled><svg class="icon"><use href="#i-topoedit"/></svg><span class="caret"></span></button>
          <button class="overflow" aria-label="更多"></button>
        </div>
        <div class="bar">
          <span class="grip"></span>
          <button class="tool" aria-label="影像"><svg class="icon"><use href="#i-stack"/></svg></button>
          <button class="overflow" aria-label="更多"></button>
        </div>
      </div>

      <main class="workspace">
        <section class="contents">
          <div class="panel-title">
            <h2>内容列表</h2>
            <button aria-label="自动隐藏"><svg class="pin"><use href="#i-pin"/></svg></button>
            <button aria-label="关闭"><svg class="close"><use href="#i-close"/></svg></button>
          </div>
          <div class="panel-tools">
            <button class="tool pressed" aria-label="按绘制顺序列出"><svg class="icon large"><use href="#i-listdraw"/></svg></button>
            <button class="tool" aria-label="按源列出"><svg class="icon"><use href="#i-listsource"/></svg></button>
            <button class="tool" aria-label="按可见性列出"><svg class="icon"><use href="#i-listvis"/></svg></button>
            <button class="tool" aria-label="按选择列出"><svg class="icon"><use href="#i-listsel"/></svg></button>
            <span class="sep"></span>
            <button class="tool" aria-label="选项"><svg class="icon"><use href="#i-options"/></svg></button>
          </div>
          <ul class="layer-tree">
            <li class="group"><button class="expander minus" aria-label="折叠"></button><svg class="icon"><use href="#i-layers"/></svg><span class="selected">图层</span></li>
            <li class="layer"><button class="expander minus" aria-label="折叠"></button><label><input type="checkbox" checked>线</label></li>
            <li class="symbol"><span class="swatch-line"></span></li>
            <li class="layer"><button class="expander minus" aria-label="折叠"></button><label><input type="checkbox" checked>huatan</label></li>
            <li class="symbol"><span class="swatch blue"></span></li>
            <li class="layer"><button class="expander minus" aria-label="折叠"></button><label><input type="checkbox" checked>小班</label></li>
            <li class="symbol"><span class="swatch purple"></span></li>
          </ul>
        </section>

        <section class="center">
          <div class="map-view">
            <svg class="map" role="img" aria-label="地图">
              <g transform="translate(0 1) scale(.3333)">
                <path class="plot" d="M530 44h14l5 8h38v45h-13l-4-7h-14l-6 7h-20z"/>
                <path class="plot" d="M603 58h80v70h-15l-6 6v104l-9 2v40l-22 2v46h-32v-36l-4-4v-4h5V106l-3-6z"/>
                <path class="plot" d="M301 205h37l5-9h13l4 10h71l3-12h21v12h38v-19h37l6-8h12l5 8h34v45h-11l-4-6h-16l-6 6h-13l-5-6h-22l-17 8-3 14-12-1-4-7h-40l-7 2h-19l-4 7h-18l-6-7h-15l-7 7h-13l-7-8h-26l-11 6z"/>
                <path class="plot" d="M295 337h120l1 3h62l15-6 5-12h82v-5h7v53h-24l-5-9h-32l-6 8-27 1v12l-58 2-5-6h-24l-6 6h-12l-4-6-26 6-4-4-29-2-7 4h-23z"/>
                <path class="plot" d="M257 500h20l5-7 8 8h24l26-2 3-6 7 6 24 4 22-4 4-6h8l4 6h13v45h-12l-3-6-22-2-8 6h-23l-9-6h-38l-10 4h-10l-5-5h-19l-4 7h-5z"/>
                <path class="plot" d="M475 493h39v7h6v-7h25v24h-7l-8-4-5 5v30l11 2v12h-52v-20l12-3 2-7v-13h-23z"/>
                <path class="plot" d="M551 490h9v24l3 4v17h-31v-8l13-1 6-6z"/>
                <path class="road" d="M201 469h96v3h192v3h98"/>
              </g>
              <g transform="translate(230 1) scale(.3333)">
                <path class="road" d="M142 22L-4 376"/>
                <path class="plot" d="M103 226l14-36 5-8 11-32 17-18-7-6v-8l15-16 7-2h35l1 4h25v11h37v19h-3v92z"/>
                <path class="court" d="M145 125h118M148 128h30M209 128h28M199 126h11v34h-11z"/>
                <path class="shade" d="M199 126h11v24h-11z"/>
                <path class="plot" d="M109 262h18l3-14h6l1 12 10 6 5 16 8 2 5-14 10-6 2-14h7l3 14 8 8 5 8 13-2 2-12 7-4 3-12h6l3 10h20v8l-4 2v40H109z"/>
                <path class="court" d="M202 264h11v11h-11z"/>
                <path class="plot" d="M252 295h50l-3 5v109h-43l4-34-6-20 6-20-6-15z"/>
                <path class="plot" d="M55 388h196v42l-18 3h-48v15h-12l-1-15h-70l-1 15H89l-1-15-21-3-4 3-8-3z"/>
                <path class="road" d="M7 478h47v3h96l1 3h95l1 3h47l76-90"/>
              </g>
              <g transform="translate(0 176) scale(.3333)">
                <path class="road" d="M607 46L412 514"/>
                <path class="plot" d="M652 35h35l5 12h15V35h36v12h17V35h36v12h18V35h37v12h14V35h37v41H745v-3h-45v3h-48z"/>
                <path class="plot" d="M597 173l15-3h16l5 13h15l2-11h32l5 12h15l2-12h36l4 12h10l1-12h38l4 12h13l4-12h35v42H597l-5-6z"/>
                <path class="plot" d="M544 304h36l3 14h14l1-14h32l6 14h14l2-12h34l4 10h14l3-11h33l4 10h12l4-9 37-2-3 8v34H544z"/>
                <path class="plot" d="M487 436h37l5 11h12l4-11h32l6 12h13l2-12h34l5 11h12l3-11h34l5 11h11l3-11h38v39H487z"/>
                <path class="plot" d="M421 103h19l6 11 12 2 6-13h24v33h-22v12l10 8v22h-49v-24l12-4v-14h-21z"/>
                <path class="plot" d="M369 245l11-4h8l6 15h12l5-15h23v30l-22 2v15l13 3v25h-49v-24l12-4v-17l-13-1-11-8z"/>
              </g>
              <g transform="translate(230 176) scale(.3333)">
                <path class="road" d="M450-30L478 0l102 108 40 64 40 62 20 36 42 50 33 17"/>
                <path class="plot" d="M208 318l48-4h108v-22h242l2 54-118 2-68-2v21l-52 3-2-3-38 4-122 2z"/>
                <path class="water" d="M312 118l-12 4-15 8-17 25-18 30-5 15 5 20 8 6h80l5-3h43v-23l-14-6-12-12-6-17 6-25-10-6-25-4z"/>
                <path class="water" d="M313 118l5-13 15-13 22 1 35 9 50 26 48 17 7 7-5 6h-68l-8-16-14-10-16-2-22 7-17-5-27-8z"/>
                <path class="water" d="M395 200l15-8 10-17 4-9 66-2 10-7h20l15 15 13 18 9 10-2 14-15 3-50 3-95 2z"/>
                <ellipse class="water" cx="391" cy="164" rx="17" ry="26"/>
                <path class="thin" d="M252 151l18 8M515 142l-15 16M381 174l10-31 10 31zM385 146c-9 12-6 30 6 38 14-9 14-30 4-40"/>
              </g>
            </svg>
            <div class="vscroll"><span class="caret up"></span><span class="thumb"></span><span class="caret"></span></div>
            <div class="map-footer">
              <button class="mini on" aria-label="数据视图"><svg><use href="#i-dataview"/></svg></button>
              <button class="mini" aria-label="布局视图"><svg><use href="#i-layout"/></svg></button>
              <span class="sep dark"></span>
              <button class="mini gap" aria-label="刷新"><svg><use href="#i-refresh"/></svg></button>
              <button class="mini" aria-label="暂停绘制"><svg><use href="#i-pause"/></svg></button>
              <span class="caret left"></span>
              <span class="hthumb"></span>
              <span class="caret right"></span>
            </div>

            <div class="line-join">
              <div class="line-join-title">线连接<span class="caret"></span><button aria-label="关闭"><svg class="close"><use href="#i-close-bold"/></svg></button></div>
              <div class="line-join-body">
                <button class="power" aria-label="启用"><svg class="icon"><use href="#i-power"/></svg></button>
                <label for="join-layer">图层</label>
                <select id="join-layer"><option>ZX</option></select>
                <span class="dash"></span>
              </div>
            </div>
          </div>

          <div class="table-panel">
            <div class="panel-title">
              <h2>表</h2>
              <button aria-label="自动隐藏"><svg class="pin"><use href="#i-pin"/></svg></button>
              <button aria-label="关闭"><svg class="close"><use href="#i-close"/></svg></button>
            </div>
            <div class="panel-tools table-tools">
              <button class="tool drop" aria-label="表选项"><svg class="icon"><use href="#i-options"/></svg><span class="caret"></span></button>
              <span class="sep"></span>
              <button class="tool drop" aria-label="关联表"><svg class="icon"><use href="#i-related"/></svg><span class="caret"></span></button>
              <span class="sep"></span>
              <button class="tool" aria-label="按属性选择"><svg class="icon"><use href="#i-selattr"/></svg></button>
              <button class="tool" aria-label="切换选择"><svg class="icon"><use href="#i-switch"/></svg></button>
              <button class="tool" aria-label="清除选择" disabled><svg class="icon"><use href="#i-clear"/></svg></button>
              <button class="tool" aria-label="缩放至所选" disabled><svg class="icon"><use href="#i-zoomsel"/></svg></button>
              <button class="tool" aria-label="删除所选" disabled><svg class="icon"><use href="#i-x"/></svg></button>
            </div>
            <div class="panel-title">
              <h2>线</h2>
              <button aria-label="关闭"><svg class="close"><use href="#i-close"/></svg></button>
            </div>
            <div class="grid-box">
              <div class="grid-scroll">
                <table>
                  <colgroup><col class="c-mark"><col class="c-id"><col class="c-shape"><col class="c-length"></colgroup>
                  <thead>
                    <tr><th></th><th>OBJECTID *</th><th>Shape *</th><th>Shape_Length</th></tr>
                  </thead>
                  <tbody>
                    <tr class="current"><th><span class="caret right"></span></th><td class="num">1</td><td>折线</td><td class="num">107.497309</td></tr>
                    <tr><th></th><td class="num">2</td><td>折线</td><td class="num">81.639321</td></tr>
                    <tr><th></th><td class="num">3</td><td>折线</td><td class="num">85.800341</td></tr>
                    <tr><th></th><td class="num">4</td><td>折线</td><td class="num">102.293789</td></tr>
                    <tr><th></th><td class="num">5</td><td>折线</td><td class="num">81.784195</td></tr>
                  </tbody>
                </table>
              </div>
              <div class="record-nav">
                <button class="nav" aria-label="第一条"><svg width="10" height="9"><path d="M1 0h2v9H1zM9 0v9L4 4.5z"/></svg></button>
                <button class="nav" aria-label="上一条"><svg width="10" height="9"><path d="M7 0v9L2 4.5z"/></svg></button>
                <input type="text" value="1" aria-label="当前记录">
                <button class="nav" aria-label="下一条"><svg width="10" height="9"><path d="M3 0v9l5-4.5z"/></svg></button>
                <button class="nav" aria-label="最后一条"><svg width="10" height="9"><path d="M1 0v9l5-4.5zM7 0h2v9H7z"/></svg></button>
                <span class="sep"></span>
                <button class="tool pressed" aria-label="显示所有记录"><svg class="icon"><use href="#i-allrows"/></svg></button>
                <button class="tool" aria-label="显示所选记录"><svg class="icon"><use href="#i-selrows"/></svg></button>
                <span class="sep"></span>
                <span class="count">(0 / 5 已选择)</span>
              </div>
            </div>
            <div class="sheet-tabs"><button>线</button></div>
          </div>
        </section>

        <section class="toolbox">
          <div class="panel-title">
            <h2>ArcToolbox</h2>
            <button aria-label="自动隐藏"><svg class="pin"><use href="#i-pin"/></svg></button>
            <button aria-label="关闭"><svg class="close"><use href="#i-close"/></svg></button>
          </div>
          <ul class="tool-tree">
            <li class="root"><svg class="icon"><use href="#i-boxfolder"/></svg>ArcToolbox</li>
            <li><button class="expander" aria-label="展开"></button><svg class="icon"><use href="#i-box"/></svg>3D Analyst 工具</li>
            <li><button class="expander" aria-label="展开"></button><svg class="icon"><use href="#i-box"/></svg>Data Interoperability Tools</li>
            <li><button class="expander" aria-label="展开"></button><svg class="icon"><use href="#i-box"/></svg>Geostatistical Analyst 工具</li>
            <li><button class="expander" aria-label="展开"></button><svg class="icon"><use href="#i-box"/></svg>Network Analyst 工具</li>
            <li><button class="expander" aria-label="展开"></button><svg class="icon"><use href="#i-box"/></svg>Schematics 工具</li>
            <li><button class="expander" aria-label="展开"></button><svg class="icon"><use href="#i-box"/></svg>Spatial Analyst 工具</li>
            <li><button class="expander" aria-label="展开"></button><svg class="icon"><use href="#i-box"/></svg>Tracking Analyst 工具</li>
            <li><button class="expander" aria-label="展开"></button><svg class="icon"><use href="#i-box"/></svg>编辑工具</li>
            <li><button class="expander" aria-label="展开"></button><svg class="icon"><use href="#i-box"/></svg>地理编码工具</li>
            <li><button class="expander" aria-label="展开"></button><svg class="icon"><use href="#i-box"/></svg>多维工具</li>
            <li><button class="expander" aria-label="展开"></button><svg class="icon"><use href="#i-box"/></svg>分析工具</li>
            <li><button class="expander" aria-label="展开"></button><svg class="icon"><use href="#i-box"/></svg>服务器工具</li>
            <li><button class="expander" aria-label="展开"></button><svg class="icon"><use href="#i-box"/></svg>空间统计工具</li>
            <li><button class="expander" aria-label="展开"></button><svg class="icon"><use href="#i-boxscript"/></svg>时空模式挖掘工具</li>
            <li><button class="expander" aria-label="展开"></button><svg class="icon"><use href="#i-box"/></svg>数据管理工具</li>
            <li><button class="expander" aria-label="展开"></button><svg class="icon"><use href="#i-box"/></svg>线性参考工具</li>
            <li><button class="expander" aria-label="展开"></button><svg class="icon"><use href="#i-box"/></svg>制图工具</li>
            <li><button class="expander" aria-label="展开"></button><svg class="icon"><use href="#i-box"/></svg>转换工具</li>
            <li><button class="expander" aria-label="展开"></button><svg class="icon"><use href="#i-box"/></svg>宗地结构工具</li>
          </ul>
          <div class="dock-tabs">
            <button class="active"><svg class="icon"><use href="#i-toolbox"/></svg>ArcT...</button>
            <button><svg class="icon"><use href="#i-catalog"/></svg>目录</button>
            <button><svg class="icon"><use href="#i-attrs"/></svg>属性</button>
            <button><svg class="icon"><use href="#i-create"/></svg>创建...</button>
            <button><svg class="icon"><use href="#i-sketch"/></svg>编辑...</button>
          </div>
        </section>
      </main>

      <footer class="status">
        <span class="coords"><span>112.984</span><span>28.182 十进制度</span></span>
        <svg class="size-grip" width="10" height="10" aria-hidden="true"><path d="M7 1h2v2H7zM7 4h2v2H7zM7 7h2v2H7zM4 4h2v2H4zM4 7h2v2H4zM1 7h2v2H1z" fill="#c2c2c2"/></svg>
      </footer>
    </div>

    <!-- pointer highlight -->
    <svg class="pointer" width="60" height="60" aria-hidden="true">
      <circle cx="30" cy="30" r="29" fill="#f0f014"/>
      <path d="M43 46l6-3 1 5-5 3z" fill="#f4f1d8" stroke="#666"/>
      <path d="M29 29l20 11 1 4-4 4-7 5-3-2z" fill="#3f6d8c" stroke="#10202c" stroke-width="2" stroke-linejoin="round"/>
      <path d="M31 32l13 8-5 8z" fill="#5f8daa"/>
    </svg>
  </div>

</body>
</html>
```
FILE: styles.css
```css
* {
  margin: 0;
  padding: 0;
  box-sizing: border-box;
}
body {
  font-family: "Noto Sans", "Noto Sans CJK SC", sans-serif;
  font-size: 12px;
  line-height: 20px;
  color: #111;
  background-color: #8a8a8a;
}
button, input, select {
  font: inherit;
  color: inherit;
  border: none;
  background: none;
  border-radius: 0;
}
h1, h2 {
  font-size: 12px;
  font-weight: normal;
}
ul {
  list-style: none;
}
.icon-defs {
  position: absolute;
  width: 0;
  height: 0;
}
.icon {
  width: 16px;
  height: 16px;
  flex: none;
}
.icon.large {
  width: 18px;
  height: 18px;
}
.pin {
  width: 10px;
  height: 12px;
}
.close {
  width: 10px;
  height: 10px;
  color: #222;
}

/* window */
.window {
  position: relative;
  display: flex;
  flex-direction: column;
  height: 100vh;
  min-height: 600px;
  padding: 0 3px 5px 6px;
  border: 1px solid #5c5c5c;
  border-radius: 7px 7px 5px 5px;
  background-color: #ededed;
}
.titlebar {
  display: flex;
  align-items: center;
  height: 28px;
  gap: 5px;
  padding-left: 1px;
}
.titlebar h1 {
  flex: 1;
  font-size: 13px;
}
.window-buttons {
  display: flex;
  align-self: flex-start;
  height: 19px;
  border: 1px solid #aaa;
  border-top: none;
  border-radius: 0 0 5px 5px;
}
.window-buttons button {
  display: flex;
  align-items: center;
  justify-content: center;
  width: 27px;
  border-right: 1px solid #bbb;
}
.window-buttons .wide {
  width: 47px;
  border-right: none;
}
.frame {
  flex: 1;
  display: flex;
  flex-direction: column;
  min-height: 0;
  border: 1px solid #777;
}

/* menus and toolbars */
.menubar {
  display: flex;
  align-items: center;
  gap: 1px;
  height: 26px;
  padding: 2px 0 0 4px;
}
.menubar button {
  padding: 0 8px;
}
.toolbars {
  display: grid;
  height: 27px;
}
.row-one {
  grid-template-columns: 611fr 291fr 133fr;
}
.row-two {
  grid-template-columns: 527fr 369fr 94fr 45fr;
}
.bar {
  display: flex;
  align-items: center;
  min-width: 0;
  padding: 0 1px 0 6px;
}
.grip {
  flex: none;
  width: 2px;
  height: 16px;
  margin-right: 2px;
  background: repeating-linear-gradient(#aaa 0 2px, transparent 2px 4px);
}
.tool {
  flex: none;
  display: flex;
  align-items: center;
  justify-content: center;
  width: 22px;
  height: 22px;
}
.tool.drop {
  width: 34px;
  gap: 4px;
}
.tool.pressed {
  border: 1px solid #5aa2dd;
  background-color: #dcebf6;
}
.arrow-only {
  display: flex;
  justify-content: center;
  width: 11px;
}
.sep {
  flex: none;
  width: 1px;
  height: 14px;
  margin: 0 3px 0 2px;
  background-color: #c4c4c4;
}
.sep.dark {
  background-color: #777;
}
.caret {
  flex: none;
  width: 0;
  height: 0;
  border: 3px solid transparent;
  border-top: 4px solid #111;
  border-bottom: none;
}
.caret.up {
  border-top: none;
  border-bottom: 4px solid #111;
}
.caret.left {
  border: 3px solid transparent;
  border-left: none;
  border-right: 4px solid #111;
}
.caret.right {
  border: 3px solid transparent;
  border-right: none;
  border-left: 4px solid #111;
}
button:disabled .caret {
  border-top-color: #aaa;
}
.scale {
  appearance: none;
  flex: none;
  width: 147px;
  height: 20px;
  padding-left: 2px;
  border-top: 1px solid #bbb;
  font-family: "DejaVu Sans Mono", monospace;
  font-size: 10px;
  background:
    linear-gradient(#111, #111) no-repeat 134px 8px / 7px 1px,
    linear-gradient(#111, #111) no-repeat 135px 9px / 5px 1px,
    linear-gradient(#111, #111) no-repeat 136px 10px / 3px 1px,
    linear-gradient(#111, #111) no-repeat 137px 11px / 1px 1px;
}
.text-tool {
  flex: none;
  display: flex;
  align-items: center;
  gap: 3px;
  padding: 0 3px 0 5px;
}
.overflow {
  flex: none;
  align-self: flex-end;
  width: 11px;
  height: 22px;
  margin-left: auto;
  background:
    linear-gradient(#111, #111) no-repeat 3px 14px / 6px 1px,
    linear-gradient(#111, #111) no-repeat 2px 16px / 7px 1px,
    linear-gradient(#111, #111) no-repeat 3px 17px / 5px 1px,
    linear-gradient(#111, #111) no-repeat 4px 18px / 3px 1px,
    linear-gradient(#111, #111) no-repeat 5px 19px / 1px 1px,
    linear-gradient(#111, #111) no-repeat 2px 2px / 1px 3px,
    linear-gradient(#111, #111) no-repeat 3px 3px / 1px 1px,
    linear-gradient(#111, #111) no-repeat 6px 2px / 1px 3px,
    linear-gradient(#111, #111) no-repeat 7px 3px / 1px 1px,
    linear-gradient(#e6e6e6, #a4a4a4) no-repeat 0 6px / 11px 16px;
}

/* docked panels */
.workspace {
  flex: 1;
  display: flex;
  min-height: 0;
  padding-top: 2px;
}
.panel-title {
  flex: none;
  display: flex;
  align-items: center;
  gap: 6px;
  height: 21px;
  padding: 0 3px 0 4px;
  color: #40566e;
  background: linear-gradient(90deg, #b8c9da, #c8d6e9 50%, #d2e2f4);
}
.panel-title h2 {
  flex: 1;
}
.panel-title button {
  display: flex;
}
.panel-tools {
  flex: none;
  display: flex;
  align-items: center;
  height: 26px;
  padding-left: 4px;
}
.contents {
  flex: none;
  display: flex;
  flex-direction: column;
  width: 185px;
}
.layer-tree {
  flex: 1;
  padding-top: 1px;
  border: 1px solid #888;
}
.layer-tree li {
  display: flex;
  align-items: center;
  height: 20px;
}
.layer-tree .group {
  gap: 5px;
  padding-left: 8px;
}
.layer-tree .layer {
  padding-left: 27px;
}
.layer-tree .symbol {
  padding-left: 59px;
}
.selected {
  padding: 0 2px;
  margin-left: -1px;
  color: #fff;
  background-color: #3399ff;
}
.layer-tree label {
  display: flex;
  align-items: center;
  gap: 8px;
  padding-left: 8px;
}
.layer-tree input {
  appearance: none;
  width: 11px;
  height: 11px;
  border: 1px solid #111;
}
.layer-tree input:checked::after {
  content: "";
  display: block;
  width: 3px;
  height: 6px;
  margin: 0 0 0 3px;
  border: solid #111;
  border-width: 0 2px 2px 0;
  transform: rotate(40deg);
}
.expander {
  flex: none;
  width: 9px;
  height: 9px;
  border: 1px solid #999;
  background:
    linear-gradient(#345, #345) no-repeat center / 5px 1px,
    linear-gradient(#345, #345) no-repeat center / 1px 5px;
}
.expander.minus {
  background: linear-gradient(#345, #345) no-repeat center / 5px 1px;
}
.swatch {
  width: 15px;
  height: 11px;
  border: 1px solid #777;
}
.swatch.blue {
  background-color: #bfe0f4;
}
.swatch.purple {
  background-color: #cfc6ec;
}
.swatch-line {
  width: 14px;
  height: 1px;
  background-color: #2e7d80;
}

/* map */
.center {
  flex: 1;
  display: flex;
  flex-direction: column;
  min-width: 0;
  margin: 0 5px;
}
.map-view {
  position: relative;
  flex: 1;
  display: grid;
  grid-template-columns: 1fr 16px;
  grid-template-rows: 1fr 18px;
  min-height: 0;
  margin-bottom: 6px;
  border-top: 2px solid #6c6c6c;
  border-left: 2px solid #6c6c6c;
}
.map {
  width: 100%;
  height: 100%;
}
.plot {
  fill: #cfc6ec;
  stroke: #6c6b78;
  stroke-width: 3px;
}
.water {
  fill: #b9dff3;
  stroke: #6c6b78;
  stroke-width: 3px;
}
.road {
  fill: none;
  stroke: #26787a;
  stroke-width: 3px;
}
.thin {
  fill: none;
  stroke: #666;
  stroke-width: 2px;
}
.court {
  fill: #ededed;
  stroke: #6c6b78;
  stroke-width: 2px;
}
.shade {
  fill: #777;
}
.vscroll {
  display: flex;
  flex-direction: column;
  align-items: center;
  justify-content: space-between;
  padding: 6px 0 5px;
}
.vscroll .thumb {
  flex: 1;
  width: 12px;
  margin: 14px 0 20px;
  border: 1px solid #999;
  border-left: none;
  background:
    repeating-linear-gradient(#666 0 1px, #eee 1px 3px) no-repeat 3px center / 7px 8px,
    linear-gradient(90deg, #ededed 30%, #c3c3c8);
}
.map-footer {
  grid-column: 1 / 3;
  display: flex;
  align-items: center;
}
.mini {
  display: flex;
  align-items: center;
  justify-content: center;
  width: 17px;
  height: 15px;
}
.mini svg {
  width: 12px;
  height: 12px;
}
.mini.on {
  border: 1px solid #777;
  border-radius: 2px;
  background-color: #ddd;
}
.mini.gap {
  margin-left: 1px;
}
.map-footer .caret.left {
  margin: 0 7px;
}
.hthumb {
  flex: 1;
  height: 12px;
  border: 1px solid #999;
  border-top: none;
  background:
    repeating-linear-gradient(90deg, #666 0 1px, #eee 1px 3px) no-repeat center 3px / 8px 7px,
    linear-gradient(#ededed 35%, #c3c3c8 55%);
}
.map-footer .caret.right {
  margin: 0 24px 0 10px;
}

/* floating toolbar over the map */
.line-join {
  position: absolute;
  top: 11px;
  left: 16px;
  width: 166px;
  padding: 1px;
  border: 2px solid #777;
  background-color: #ededed;
}
.line-join-title {
  display: flex;
  align-items: center;
  height: 18px;
  padding: 0 4px 0 2px;
  color: #fff;
  background-color: #9a9a9a;
}
.line-join-title .caret {
  margin: 0 8px 0 auto;
  border-top-color: #fff;
}
.line-join-title button {
  display: flex;
}
.line-join-body {
  display: flex;
  align-items: center;
  height: 24px;
  padding-left: 3px;
  color: #a0a0a0;
}
.power {
  display: flex;
  margin-right: 5px;
}
.line-join-body select {
  appearance: none;
  width: 86px;
  height: 24px;
  margin: 0 4px;
  padding-left: 2px;
  border: 1px solid #aaa;
  color: #555;
  background:
    linear-gradient(#888, #888) no-repeat 73px 11px / 7px 1px,
    linear-gradient(#888, #888) no-repeat 74px 12px / 5px 1px,
    linear-gradient(#888, #888) no-repeat 75px 13px / 3px 1px,
    linear-gradient(#888, #888) no-repeat 76px 14px / 1px 1px;
}
.dash {
  width: 15px;
  height: 3px;
  border-top: 2px solid #bbb;
  border-bottom: 1px solid #999;
}

/* attribute table */
.table-panel {
  flex: none;
}
.table-tools {
  height: 27px;
  padding: 0 0 2px 3px;
}
.grid-box {
  margin-left: 1px;
  border-top: 3px solid #777;
  border-left: 2px solid #777;
}
.grid-scroll {
  height: 119px;
  overflow: hidden;
  padding: 1px 1px 0;
}
table {
  width: 334px;
  table-layout: fixed;
  border-collapse: collapse;
  font-family: "DejaVu Sans Mono", "Noto Sans CJK SC", monospace;
  font-size: 10px;
  line-height: 14px;
}
.c-mark {
  width: 18px;
}
.c-id {
  width: 108px;
}
.c-shape {
  width: 81px;
}
th, td {
  height: 15px;
  border: 1px solid #888;
}
thead th {
  height: 16px;
  border: 1px solid #111;
  border-bottom-width: 2px;
  font-family: "Liberation Mono", monospace;
  font-size: 12px;
}
tbody th {
  border: 1px solid #111;
}
tbody th .caret {
  display: block;
  margin-left: 7px;
}
td {
  padding: 0 2px;
  color: #333;
}
.num {
  text-align: right;
}
.current td:nth-child(2) {
  border: 1px solid #111;
}
.record-nav {
  display: flex;
  align-items: center;
  height: 30px;
  padding-left: 3px;
}
.nav {
  display: flex;
  align-items: center;
  justify-content: center;
  width: 22px;
  height: 20px;
}
.record-nav input {
  width: 60px;
  padding-right: 4px;
  text-align: right;
}
.record-nav .sep {
  height: 18px;
}
.count {
  padding-left: 4px;
}
.sheet-tabs {
  height: 21px;
  padding-left: 2px;
}
.sheet-tabs button {
  height: 19px;
  padding: 0 6px;
  border: 1px solid #aaa;
  border-top: none;
  border-radius: 0 0 4px 4px;
}

/* toolbox */
.toolbox {
  flex: none;
  display: flex;
  flex-direction: column;
  width: 303px;
}
.tool-tree {
  flex: 1;
  padding-top: 1px;
  border: 1px solid #888;
}
.tool-tree li {
  display: flex;
  align-items: center;
  gap: 5px;
  height: 20px;
  padding-left: 8px;
}
.tool-tree .root {
  gap: 4px;
  padding-left: 5px;
}
.tool-tree li:not(.root) .icon {
  margin-left: 1px;
}
.dock-tabs {
  display: flex;
  height: 21px;
  padding: 0 3px 2px 2px;
}
.dock-tabs button {
  flex: 1 1 auto;
  display: flex;
  align-items: center;
  gap: 3px;
  padding: 0 3px;
  border: 1px solid #aaa;
  border-top: none;
  border-radius: 0 0 4px 4px;
  color: #777;
}
.dock-tabs .active {
  color: #111;
}
.status {
  flex: none;
  display: flex;
  align-items: center;
  justify-content: flex-end;
  height: 23px;
  padding-right: 2px;
}
.coords {
  display: flex;
  gap: 9px;
  width: 289px;
}
.size-grip {
  align-self: flex-end;
}

/* mouse position marker */
.pointer {
  position: absolute;
  top: 427px;
  left: 34px;
}
```
